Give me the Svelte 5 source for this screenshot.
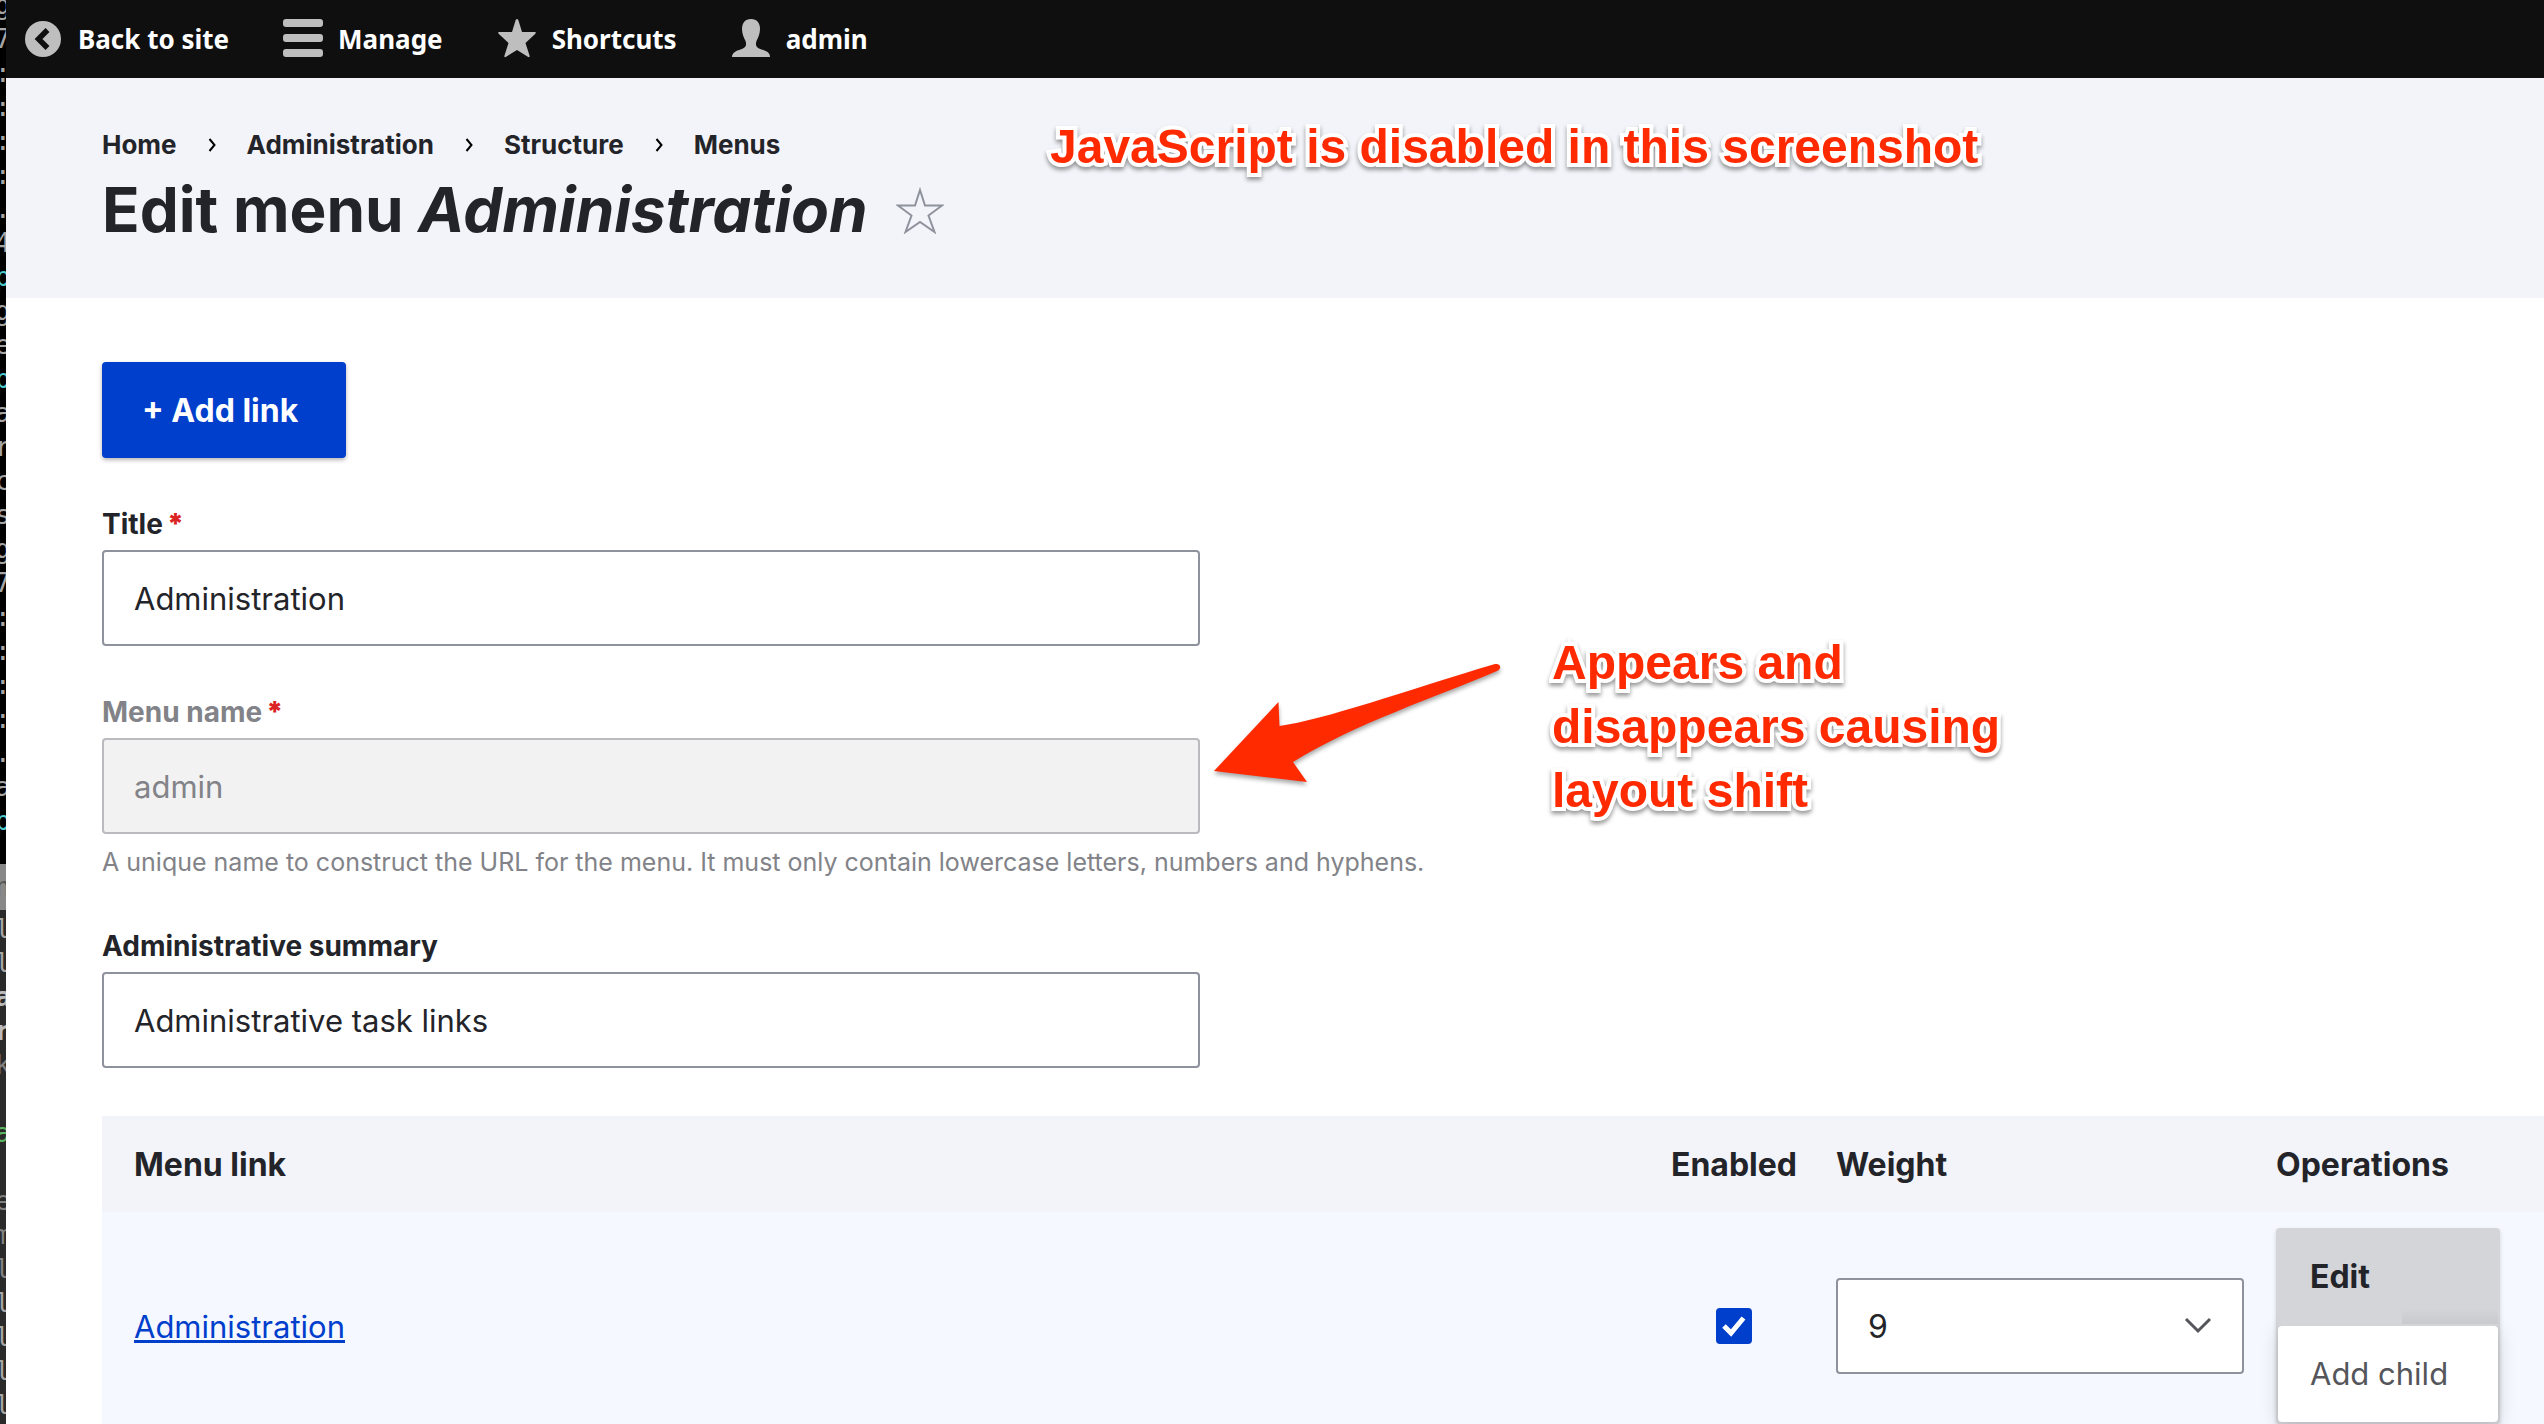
<script lang="ts">
  interface TermLine {
    text: string;
    tone?: string;
  }

  const scrollback: TermLine[] = [
    { text: 'g' }, { text: '7' }, { text: ':' }, { text: ':' }, { text: ':' },
    { text: ':' }, { text: '.' }, { text: '4' }, { text: 'p', tone: 'cyan' },
    { text: 'g' }, { text: 'e' }, { text: 'p', tone: 'cyan' }, { text: 'a' },
    { text: 'r' }, { text: 'c' }, { text: 's' }, { text: 'g' }, { text: '7' },
    { text: ':' }, { text: ':' }, { text: ':' }, { text: ':' }, { text: '.' },
    { text: 'a' }, { text: 'p', tone: 'cyan' },
  ];

  const prompt: TermLine[] = [
    { text: 'l' }, { text: 'l' }, { text: 'a', tone: 'strong' }, { text: 'r', tone: 'strong' },
    { text: 'k', tone: 'dim' }, { text: '' }, { text: 'a', tone: 'green' }, { text: '' },
    { text: 'e', tone: 'dim' }, { text: 'm', tone: 'dim' }, { text: 'l', tone: 'dim' },
    { text: 'l' }, { text: 'l' }, { text: 'l' }, { text: 'l' },
  ];

  const crumbs = ['Home', 'Administration', 'Structure', 'Menus'];
  const weights = Array.from({ length: 101 }, (_, i) => i - 50);

  let title = $state('Administration');
  let summary = $state('Administrative task links');
  let enabled = $state(true);
  let weight = $state(9);
</script>

<div class="desktop">
  <div class="terminal" aria-hidden="true">
    <div class="scrollback">
      {#each scrollback as line}
        <div class="line {line.tone ?? ''}">{line.text}</div>
      {/each}
    </div>
    <div class="tab">n</div>
    <div class="prompt">
      {#each prompt as line}
        <div class="line {line.tone ?? ''}">{line.text}</div>
      {/each}
    </div>
  </div>

  <div class="page">
    <nav class="toolbar" aria-label="Administration toolbar">
      <a href="#back">
        <svg viewBox="0 0 40 40">
          <circle cx="20" cy="20" r="18" fill="#bebebe" />
          <path d="M24.500 11L15.500 20l9 9" fill="none" stroke="#0f0f0f" stroke-width="5.500" />
        </svg>
        Back to site
      </a>
      <a href="#manage">
        <svg viewBox="0 0 40 40" fill="#bebebe">
          <rect x="0" y="0" width="40" height="8" rx="3" />
          <rect x="0" y="15" width="40" height="8" rx="3" />
          <rect x="0" y="30" width="40" height="8" rx="3" />
        </svg>
        Manage
      </a>
      <a href="#shortcuts">
        <svg viewBox="0 0 40 40" fill="#bebebe">
          <path d="M20 0c1 0 1.400 1.200 1.800 2.400L25 13H37.500c1.800 0 1.600 1.200.600 2L28.500 24l4 12.500c.5 1.800-.5 2-1.700 1.200L20 31 9.200 37.700c-1.200.8-2.200.6-1.700-1.200l4-12.500L1.900 15c-1-.8-1.200-2 .6-2h12.500l3.200-10.600C18.600 1.200 19 0 20 0z" />
        </svg>
        Shortcuts
      </a>
      <a href="#admin">
        <svg viewBox="0 0 40 40" fill="#bebebe">
          <path d="M20 0c-6 0-9 4-9 10 0 5 2 9 3.500 12 1 3 1 6-2.500 7.500-5 2-11 3-11 8.500h38c0-5.500-6-6.500-11-8.500-3.500-1.500-3.500-4.500-2.500-7.500 1.500-3 3.500-7 3.500-12 0-6-3-10-9-10z" />
        </svg>
        admin
      </a>
    </nav>

    <header class="page-header">
      <nav class="breadcrumb" aria-label="Breadcrumb">
        {#each crumbs as crumb, i}
          {#if i > 0}
            <svg viewBox="0 0 8 14"><path d="M1.500 1l5 6-5 6" fill="none" stroke="#000" stroke-width="2" /></svg>
          {/if}
          <a href="#{crumb.toLowerCase()}">{crumb}</a>
        {/each}
      </nav>
      <div class="title-row">
        <h1>Edit menu <em>Administration</em></h1>
        <button class="star" aria-label="Add to shortcuts">
          <svg viewBox="0 0 48 48">
            <path d="M24 4l5 15.500h17L32.500 29.500 38.500 46 24 36 9.500 46l6-16.500L2 19.500h17z" fill="none" stroke="#8e929c" stroke-width="2" />
          </svg>
        </button>
      </div>
      <p class="note note-script">JavaScript is disabled in this screenshot</p>
    </header>

    <main>
      <button class="add-link">+ Add link</button>

      <form>
        <div class="field">
          <label for="title">Title<span class="required">*</span></label>
          <input id="title" type="text" bind:value={title} />
        </div>
        <div class="field disabled">
          <label for="menu-name">Menu name<span class="required">*</span></label>
          <input id="menu-name" type="text" value="admin" disabled />
          <p class="description">
            A unique name to construct the URL for the menu. It must only contain lowercase letters, numbers and hyphens.
          </p>
        </div>
        <div class="field">
          <label for="summary">Administrative summary</label>
          <input id="summary" type="text" bind:value={summary} />
        </div>

        <table>
          <thead>
            <tr>
              <th class="col-link">Menu link</th>
              <th class="col-enabled">Enabled</th>
              <th class="col-weight">Weight</th>
              <th class="col-operations">Operations</th>
            </tr>
          </thead>
          <tbody>
            <tr>
              <td class="col-link"><a href="#administration">Administration</a></td>
              <td class="col-enabled">
                <span class="check">
                  <input type="checkbox" aria-label="Enable Administration menu link" bind:checked={enabled} />
                  {#if enabled}
                    <svg viewBox="0 0 36 36"><path d="M8 18l7 7L27.500 10" fill="none" stroke="#fff" stroke-width="5" /></svg>
                  {/if}
                </span>
              </td>
              <td class="col-weight">
                <span class="select">
                  <select aria-label="Weight for Administration" bind:value={weight}>
                    {#each weights as w}
                      <option value={w}>{w}</option>
                    {/each}
                  </select>
                  <svg viewBox="0 0 28 18"><path d="M2 2l12 12L26 2" fill="none" stroke="#55565b" stroke-width="3" /></svg>
                </span>
              </td>
              <td class="col-operations">
                <ul class="dropbutton">
                  <li><a class="primary" href="#edit">Edit</a></li>
                  <li><a class="secondary" href="#add-child">Add child</a></li>
                </ul>
              </td>
            </tr>
          </tbody>
        </table>
      </form>

      <svg class="arrow" viewBox="0 0 290 130">
        <path d="M0 112L64.500 43l1 24C110 61 190 32 281 5c6-1 7 5 2 7C225 37 140 65 79 103l14 20z" fill="#ff2a00" />
      </svg>
      <p class="note note-shift">Appears and<br />disappears causing<br />layout shift</p>
    </main>
  </div>
</div>

<style>
  :global(body) {
    background: #fff;
  }

  .desktop {
    display: flex;
    height: 100vh;
    overflow: hidden;
    font-family: Inter, "Liberation Sans", sans-serif;
    color: #232429;
  }

  .desktop * {
    box-sizing: border-box;
  }

  /* sliver of the terminal window behind the browser */
  .terminal {
    flex: none;
    width: 6px;
    overflow: hidden;
    background: #000;
    color: #a5a5a5;
    font-family: "DejaVu Sans Mono", monospace;
    font-size: 26px;
    line-height: 34px;
    text-indent: -5px;
  }

  .scrollback {
    height: 864px;
    margin-top: -12px;
    margin-bottom: 12px;
  }

  .line {
    height: 34px;
  }

  .tab {
    height: 46px;
    line-height: 46px;
    background: #888;
    color: #555;
  }

  .prompt {
    height: 100%;
    padding-top: 2px;
    background: #2a2a2a;
  }

  .cyan {
    color: #4cc9cc;
  }

  .green {
    color: #5ab55e;
  }

  .strong {
    font-weight: 700;
    color: #bbb;
  }

  .dim {
    color: #808080;
  }

  .page {
    flex: 1;
    min-width: 0;
  }

  a {
    color: inherit;
    text-decoration: none;
  }

  button {
    border: 0;
    font: inherit;
    cursor: pointer;
  }

  .toolbar {
    display: flex;
    align-items: center;
    gap: 54px;
    height: 78px;
    padding-left: 17px;
    background: #0f0f0f;
    color: #fff;
    font-family: "Noto Sans", "Open Sans", sans-serif;
    font-size: 26px;
    font-weight: 700;
  }

  .toolbar a {
    display: flex;
    align-items: center;
    gap: 15px;
  }

  .toolbar svg {
    width: 40px;
    height: 40px;
  }

  .page-header {
    position: relative;
    height: 220px;
    padding: 51px 96px 0;
    background: #f3f4f9;
  }

  .breadcrumb {
    display: flex;
    align-items: center;
    gap: 31px;
    font-size: 26px;
    font-weight: 700;
    line-height: 32px;
  }

  .breadcrumb svg {
    width: 8px;
    height: 14px;
  }

  .title-row {
    display: flex;
    align-items: center;
    gap: 28px;
  }

  h1 {
    margin: 0;
    font-size: 62px;
    font-weight: 700;
    line-height: 98px;
  }

  .star {
    padding: 0;
    background: none;
  }

  .star svg {
    display: block;
    width: 48px;
    height: 48px;
  }

  main {
    position: relative;
    padding: 64px 0 0 96px;
  }

  .add-link {
    height: 96px;
    padding: 0 48px 0 40px;
    border-radius: 4px;
    background: #003ecc;
    box-shadow: 0 2px 4px rgba(0, 0, 0, 0.3);
    color: #fff;
    font-size: 32px;
    font-weight: 700;
  }

  form {
    margin-top: 48px;
  }

  .field {
    margin-bottom: 48px;
  }

  label {
    display: block;
    padding-bottom: 8px;
    font-size: 28px;
    font-weight: 700;
    line-height: 36px;
  }

  .required {
    margin-left: 4px;
    color: #dc2323;
    font-weight: 900;
  }

  input[type="text"] {
    display: block;
    width: 1098px;
    max-width: 100%;
    height: 96px;
    padding: 0 30px;
    border: 2px solid #8e929c;
    border-radius: 4px;
    background: #fff;
    color: #232429;
    font-family: inherit;
    font-size: 31px;
  }

  .disabled label,
  .disabled .description {
    color: #828388;
  }

  .disabled .required {
    color: #dc2323;
  }

  .disabled input[type="text"] {
    border-color: #bababf;
    background: #f2f2f3;
    color: #828388;
  }

  .description {
    margin: 12px 0 0;
    padding-bottom: 2px;
    font-size: 25px;
    line-height: 32px;
  }

  table {
    width: 100%;
    border-collapse: collapse;
    table-layout: fixed;
    font-size: 31px;
  }

  th {
    height: 96px;
    padding: 0 16px;
    background: #f3f4f9;
    font-size: 32px;
    font-weight: 700;
    text-align: left;
  }

  td {
    padding: 16px;
    background: #f5f8ff;
    vertical-align: middle;
  }

  .col-link {
    padding-left: 32px;
  }

  td.col-link a {
    color: #003ecc;
    text-decoration: underline;
  }

  .col-enabled {
    width: 172px;
    text-align: center;
  }

  .col-weight {
    width: 440px;
  }

  .col-operations {
    width: 284px;
  }

  .check {
    display: grid;
    justify-content: center;
  }

  .check input,
  .check svg {
    grid-area: 1 / 1;
    width: 36px;
    height: 36px;
    margin: 0;
  }

  .check input {
    appearance: none;
    border: 2px solid #8e929c;
    border-radius: 4px;
    background: #fff;
  }

  .check input:checked {
    border-color: #003ecc;
    background: #003ecc;
  }

  .check svg {
    pointer-events: none;
  }

  .select {
    display: grid;
    align-items: center;
  }

  .select select,
  .select svg {
    grid-area: 1 / 1;
  }

  .select select {
    width: 100%;
    height: 96px;
    padding: 0 30px;
    appearance: none;
    border: 2px solid #8e929c;
    border-radius: 4px;
    background: #fff;
    color: #232429;
    font-family: inherit;
    font-size: 32px;
  }

  .select svg {
    justify-self: end;
    width: 28px;
    height: 18px;
    margin-right: 32px;
    pointer-events: none;
  }

  .dropbutton {
    width: 224px;
    margin: 0;
    padding: 0 2px 2px;
    border-radius: 4px;
    background: #d4d5d9;
    box-shadow: 0 2px 4px rgba(0, 0, 0, 0.15);
    list-style: none;
  }

  .dropbutton a {
    display: block;
    padding: 0 32px;
  }

  .primary {
    position: relative;
    z-index: 1;
    border-radius: 4px 4px 0 0;
    background: linear-gradient(#d4d5d9, #c9cacd) right bottom 2px / 96px 16px no-repeat #d4d5d9;
    font-size: 32px;
    font-weight: 700;
    line-height: 98px;
  }

  .secondary {
    border-radius: 4px;
    background: #fff;
    box-shadow: 0 4px 20px rgba(0, 0, 0, 0.15);
    color: #55565b;
    line-height: 96px;
    white-space: nowrap;
  }

  .note {
    position: absolute;
    margin: 0;
    color: #ff2a00;
    font-family: "Liberation Sans", Arial, sans-serif;
    font-size: 48px;
    font-weight: 700;
    line-height: 64px;
    white-space: nowrap;
    -webkit-text-stroke: 8px #fff;
    paint-order: stroke fill;
    filter: drop-shadow(0 3px 2px rgba(0, 0, 0, 0.4));
  }

  .note-script {
    top: 37px;
    left: 1044px;
  }

  .note-shift {
    top: 333px;
    left: 1546px;
  }

  .arrow {
    position: absolute;
    top: 361px;
    left: 1208px;
    width: 290px;
    height: 130px;
    filter: drop-shadow(0 3px 2px rgba(0, 0, 0, 0.35));
  }
</style>
